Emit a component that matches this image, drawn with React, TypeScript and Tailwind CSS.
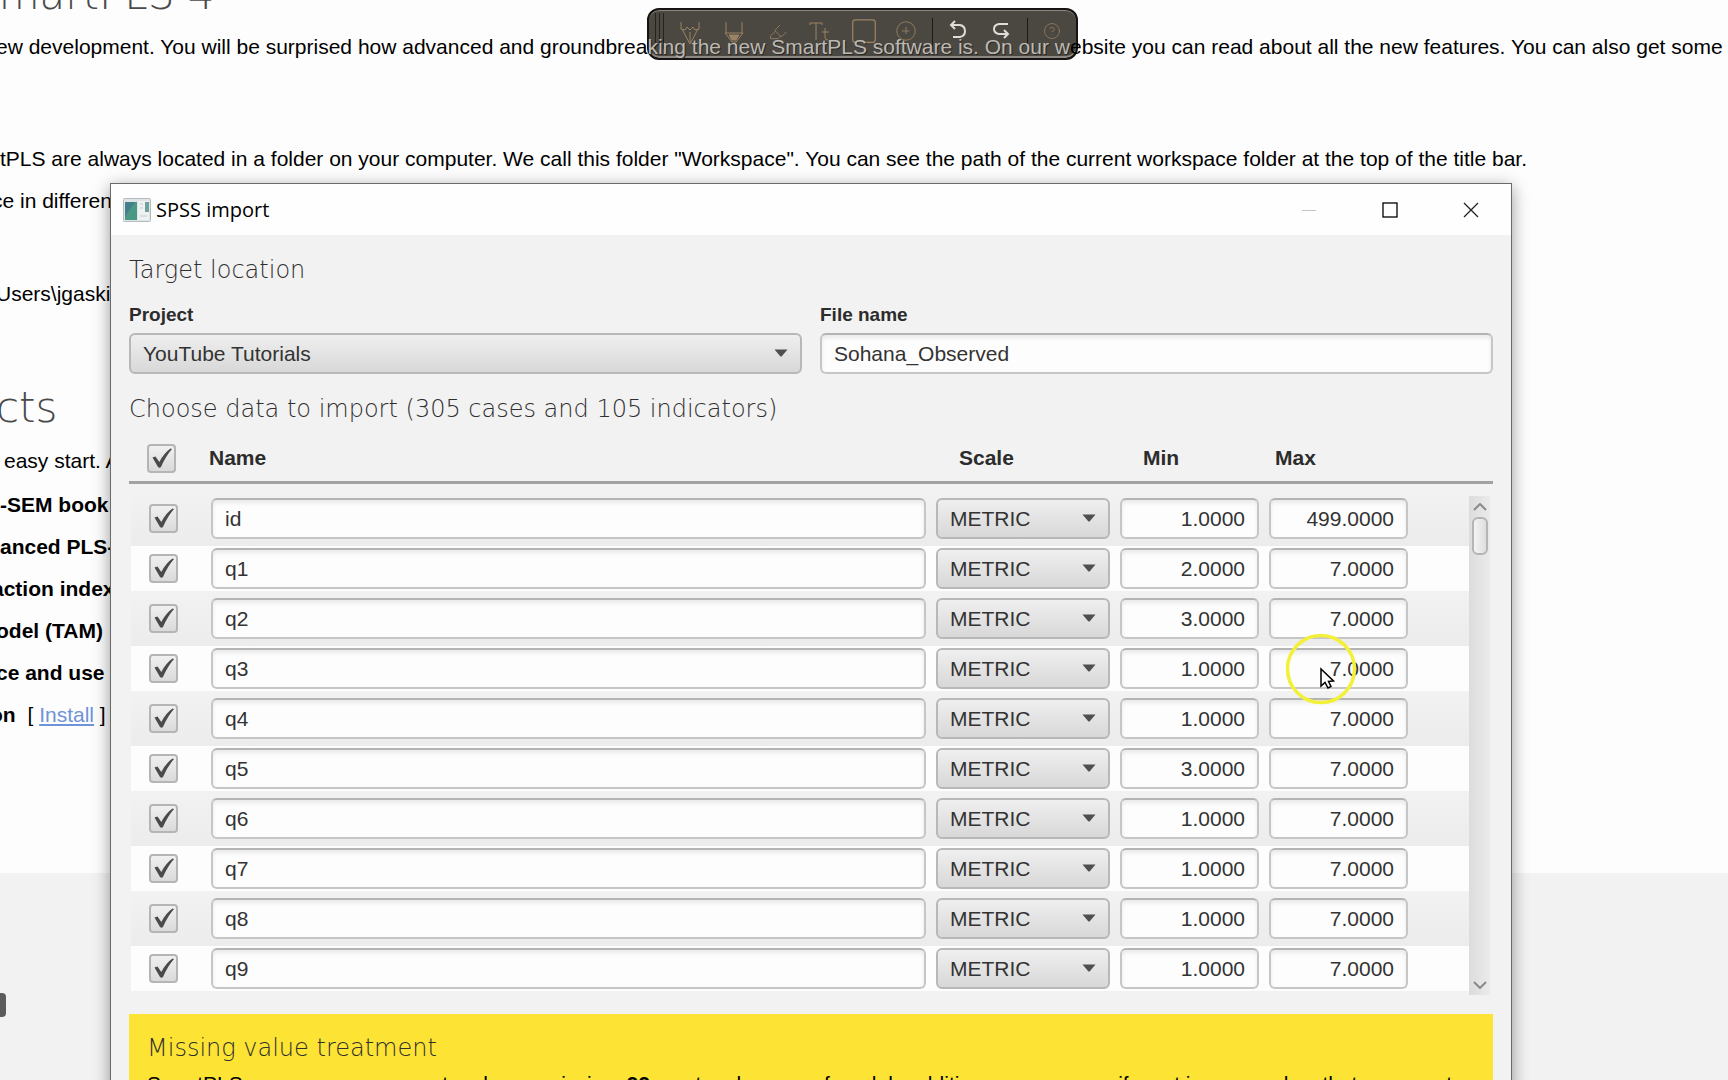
import { useState } from "react";
import { CircleHelp, CirclePlus, Highlighter, Square } from "lucide-react";

const rowData = [
  { name: "id", min: "1.0000", max: "499.0000" },
  { name: "q1", min: "2.0000", max: "7.0000" },
  { name: "q2", min: "3.0000", max: "7.0000" },
  { name: "q3", min: "1.0000", max: "7.0000" },
  { name: "q4", min: "1.0000", max: "7.0000" },
  { name: "q5", min: "3.0000", max: "7.0000" },
  { name: "q6", min: "1.0000", max: "7.0000" },
  { name: "q7", min: "1.0000", max: "7.0000" },
  { name: "q8", min: "1.0000", max: "7.0000" },
  { name: "q9", min: "1.0000", max: "7.0000" },
];

const inputClass =
  "block h-[41px] w-full rounded-md border-2 border-[#c6c6c6] border-t-[#b4b4b4] bg-[#fdfdfd] px-3 text-[21px] text-[#333] shadow-[inset_0_3px_4px_rgba(0,0,0,0.08)] outline-none";

const headingClass = "font-['DejaVu_Sans'] font-extralight";

const Checkbox = ({ label }: { label: string }) => {
  const [checked, setChecked] = useState(true);
  return (
    <label className="relative block size-[29px]">
      <input
        type="checkbox"
        aria-label={label}
        checked={checked}
        onChange={() => setChecked(!checked)}
        className="block size-full appearance-none rounded-sm border-2 border-[#b5b5b5] bg-linear-to-b from-[#f0f0f0] to-[#dadada]"
      />
      {checked && (
        <svg viewBox="0 0 29 29" className="pointer-events-none absolute inset-0 size-full">
          <path d="M5.5 13.5 L8.5 12.5 L12.3 18 Q17 9 23.5 4.5 L25 5 Q18.5 12.5 14 23 Q12.5 24.5 11 23 Z" fill="#4a4a4a" />
        </svg>
      )}
    </label>
  );
};

const Dropdown = ({ id, label, value }: { id?: string; label?: string; value: string }) => (
  <div className="relative">
    <select
      id={id}
      aria-label={label}
      className="block h-[41px] w-full appearance-none rounded-md border-2 border-[#b8b8b8] bg-linear-to-b from-[#efefef] to-[#d8d8d8] px-3 text-[21px] text-[#333] outline-none"
    >
      <option>{value}</option>
    </select>
    <svg viewBox="0 0 14 8" className="pointer-events-none absolute top-4 right-3.5 h-2 w-3.5">
      <path d="M0.5 0.5 H13.5 L8 7 Q7 8 6 7 Z" fill="#4f4f4f" />
    </svg>
  </div>
);

const Toolbar = () => (
  <div className="absolute top-2 left-[647px] flex h-[52px] w-[431px] items-start rounded-xl border-2 border-[#151412] bg-[#4b4741] pt-1.5 shadow-[inset_0_1px_0_#8b8882,inset_0_-2px_0_#8b8882]">
    <div className="mt-[-3px] ml-1.5 flex gap-[3px]">
      <span className="h-9 w-px bg-[#25231f]" />
      <span className="h-9 w-px bg-[#25231f]" />
      <span className="h-9 w-px bg-[#25231f]" />
    </div>
    <div className="ml-1 flex flex-1 items-start text-[#9b8364]">
      <button aria-label="Pen" className="flex w-11 justify-center pt-1">
        <svg viewBox="0 0 20 26" className="h-6.5 w-5" fill="none" stroke="currentColor" strokeWidth="1">
          <path d="M1 2 V9 L5 10 L7 7 L10 10 L13 7 L15 10 L19 9 V2 M2 9 L10 24 L18 9 M10 12 V22" />
        </svg>
      </button>
      <button aria-label="Marker" className="flex w-11 justify-center pt-1">
        <svg viewBox="0 0 20 26" className="h-6.5 w-5" fill="none" stroke="currentColor" strokeWidth="1">
          <path d="M2 2 V13 M18 2 V13 M1 13 H19 L12 22 H8 Z" />
          <path d="M5 15 H15 L12 20 H8 Z" fill="currentColor" />
        </svg>
      </button>
      <button aria-label="Highlighter" className="flex w-11 justify-center pt-1.5">
        <Highlighter size={20} strokeWidth={1} />
      </button>
      <button aria-label="Text" className="flex w-10 justify-center pt-1">
        <svg viewBox="0 0 22 24" className="h-6 w-5.5" fill="none" stroke="currentColor" strokeWidth="1">
          <path d="M1 5 V3 H13 V5 M7 3 V20 M16 8 V18 Q16 20 19 20 M13 12 H20" />
        </svg>
      </button>
      <button aria-label="Shape" className="flex w-12 justify-center">
        <Square size={30} strokeWidth={1} />
      </button>
      <button aria-label="Magnifier" className="flex w-9 justify-center pt-1">
        <CirclePlus size={22} strokeWidth={1} strokeDasharray="3 1" />
      </button>
      <span className="mt-0.5 ml-2 h-7 w-px bg-[#1d1b18]" />
      <button aria-label="Undo" className="flex w-[50px] justify-center pt-1 text-[#deddd9]">
        <svg viewBox="0 0 18 20" className="h-5 w-4.5" fill="none" stroke="currentColor" strokeWidth="2">
          <path d="M6 1 L2 5 L6 9 M2 5 H11 Q16 6 16 11 Q16 16 11 17 H4" />
        </svg>
      </button>
      <button aria-label="Redo" className="flex w-9 justify-center pt-1.5 text-[#deddd9]">
        <svg viewBox="0 0 18 20" className="h-5 w-4.5" fill="none" stroke="currentColor" strokeWidth="2">
          <path d="M16 2 H7 Q2 3 2 7 Q2 11 7 12 H15 M12 8 L16 12 L12 16" />
        </svg>
      </button>
      <span className="mt-0.5 ml-2 h-7 w-px bg-[#1d1b18]" />
      <button aria-label="Help" className="flex flex-1 justify-center pt-1.5">
        <CircleHelp size={18} strokeWidth={1} />
      </button>
    </div>
  </div>
);

// start page behind the dialog, scrolled sideways so the line starts are cut off
const StartPage = () => (
  <main className="flex min-h-screen flex-col text-[21px] leading-[42px] whitespace-nowrap text-black">
    <h1 className={`${headingClass} -mt-[31px] -ml-7 text-[42px] leading-[52px] text-[#4a4a4a]`}>SmartPLS 4</h1>
    <Toolbar />
    <p className="relative z-10 mt-[5px] -ml-1">
      ew development. You will be surprised how advanced and groundbrea
      <span className="text-[#bcb9b3] [text-shadow:1px_1px_0_#2a2824]">
        king the new SmartPLS software is. On our w
      </span>
      ebsite you can read about all the new features. You can also get some
    </p>
    <p className="mt-[70px]">
      tPLS are always located in a folder on your computer. We call this folder "Workspace". You can see the path of
      the current workspace folder at the top of the title bar.
    </p>
    <p className="-ml-2">ce in different</p>
    <p className="mt-[51px] -ml-1">Users\jgaskin</p>
    <h2 className={`${headingClass} mt-[67px] -ml-1 text-[42px] leading-[52px] text-[#4a4a4a]`}>cts</h2>
    <p className="mt-1.5 ml-1">easy start. All</p>
    <ul className="mt-0.5 font-bold">
      <li>-SEM book</li>
      <li>anced PLS-</li>
      <li className="-ml-2">action index</li>
      <li className="-ml-1">odel (TAM)</li>
      <li className="-ml-1">ce and use</li>
      <li className="-ml-2.5">
        on <span className="ml-1.5 font-normal">[ <a href="#install" className="text-[#6f93d8] underline">Install</a> ]</span>
      </li>
    </ul>
    <footer className="mt-[137px] flex-1 bg-[#f2f2f2] pt-[120px]">
      <div className="h-6 w-1.5 rounded-r-sm bg-[#5c5c5c]" />
    </footer>
  </main>
);

const TitleBar = () => (
  <header className="flex h-[51px] shrink-0 items-center bg-[#fefefe] pl-3">
    <svg viewBox="0 0 28 24" className="h-6 w-7">
      <rect x="0.5" y="0.5" width="27" height="23" rx="1" fill="#dfe5e6" stroke="#b4bcbe" />
      <rect x="2" y="4" width="12" height="18" fill="#4a9987" />
      <path d="M2 4 H12 L2 19 Z" fill="#447f8c" />
      <rect x="15" y="3" width="11" height="19" fill="#eef1f1" />
      <rect x="22" y="4" width="4" height="10" fill="#6fa09b" />
      <path d="M17 6 H20 M17 10 H20 M17 18 H24" stroke="#c5cccc" />
    </svg>
    <h2 className="ml-[5px] flex-1 font-['Open_Sans'] text-[20px] leading-7 text-black">SPSS import</h2>
    <button aria-label="Minimize" className="flex h-full w-[81px] items-center justify-center">
      <svg viewBox="0 0 14 14" className="size-3.5"><path d="M0 7.5 H14" stroke="#c4c4c4" /></svg>
    </button>
    <button aria-label="Maximize" className="flex h-full w-[81px] items-center justify-center">
      <svg viewBox="0 0 16 16" className="size-4"><rect x="1" y="1" width="14" height="14" fill="none" stroke="#000" strokeWidth="1.3" /></svg>
    </button>
    <button aria-label="Close" className="flex h-full w-[81px] items-center justify-center">
      <svg viewBox="0 0 16 16" className="size-4"><path d="M1 1 L15 15 M15 1 L1 15" stroke="#222" strokeWidth="1.3" /></svg>
    </button>
  </header>
);

const ScrollBar = () => (
  <div className="flex w-[21px] shrink-0 flex-col items-center bg-linear-to-r from-[#dcdcdc] to-[#ebebeb]">
    <button aria-label="Scroll up" className="flex h-[21px] items-center">
      <svg viewBox="0 0 14 8" className="h-2 w-3.5"><path d="M1 7 L7 1 L13 7" fill="none" stroke="#8a8a8a" strokeWidth="2" /></svg>
    </button>
    <div className="h-[38px] w-4 rounded-md border-2 border-[#b5b5b5] bg-linear-to-r from-[#f4f4f4] to-[#dedede]" />
    <button aria-label="Scroll down" className="mt-auto flex h-[21px] items-center">
      <svg viewBox="0 0 14 8" className="h-2 w-3.5"><path d="M1 1 L7 7 L13 1" fill="none" stroke="#8a8a8a" strokeWidth="2" /></svg>
    </button>
  </div>
);

const ImportTable = () => (
  <div>
    <div className="flex h-[51px] items-center border-b-3 border-[#a2a2a2] pt-0.5 text-[21px] font-bold text-[#2c2c2c]">
      <div className="w-20 pl-[18px]">
        <Checkbox label="Select all" />
      </div>
      <span className="flex-1">Name</span>
      <span className="w-46">Scale</span>
      <span className="w-33">Min</span>
      <span className="w-[218px]">Max</span>
    </div>
    <div className="mt-3 flex pr-[3px]">
      {/* list viewport, the first row is slightly scrolled under the edge */}
      <div className="mb-1 ml-0.5 flex-1 overflow-hidden">
        <table className="-mt-[5px] w-full table-fixed border-collapse">
          <colgroup>
            <col className="w-20" />
            <col />
            <col className="w-46" />
            <col className="w-[149px]" />
            <col className="w-[210px]" />
          </colgroup>
          <tbody>
            {rowData.map((row, key) => (
              <tr
                key={key}
                className={key % 2 === 0 ? "h-[55px] bg-linear-to-b from-[#f2f2f2] to-[#ececec]" : "h-[45px] bg-[#fdfdfd]"}
              >
                <td className="p-0 pl-[18px]">
                  <Checkbox label={`Import ${row.name}`} />
                </td>
                <td className="p-0">
                  <input aria-label="Name" defaultValue={row.name} className={inputClass} />
                </td>
                <td className="p-0 pl-2.5">
                  <Dropdown label={`Scale of ${row.name}`} value="METRIC" />
                </td>
                <td className="p-0 pl-2.5">
                  <input aria-label="Min" defaultValue={row.min} className={`${inputClass} text-right`} />
                </td>
                <td className="p-0 pr-[61px] pl-2.5">
                  <input aria-label="Max" defaultValue={row.max} className={`${inputClass} text-right`} />
                </td>
              </tr>
            ))}
          </tbody>
        </table>
      </div>
      <ScrollBar />
    </div>
  </div>
);

const ImportDialog = () => (
  <section className="absolute top-[183px] right-[216px] left-[110px] z-20 border border-[#6a6a6a] bg-[#f2f2f2] shadow-[0_4px_16px_rgba(0,0,0,0.4)]">
    <TitleBar />
    <div className="px-[18px] pt-[21px]">
      <h3 className={`${headingClass} text-[24px] leading-7 text-[#2f2f2f]`}>Target location</h3>
      <div className="mt-[17px] grid grid-cols-2 gap-[18px]">
        <div>
          <label htmlFor="project" className="mb-1 block text-[19px] leading-7 font-bold text-[#2c2c2c]">
            Project
          </label>
          <Dropdown id="project" value="YouTube Tutorials" />
        </div>
        <div>
          <label htmlFor="file-name" className="mb-1 block text-[19px] leading-7 font-bold text-[#2c2c2c]">
            File name
          </label>
          <input id="file-name" defaultValue="Sohana_Observed" className={inputClass} />
        </div>
      </div>
      <h3 className={`${headingClass} mt-[21px] mb-2.5 text-[24px] leading-7 text-[#2f2f2f]`}>
        Choose data to import (305 cases and 105 indicators)
      </h3>
      <ImportTable />
      <div className="mt-[19px] h-52 bg-[#fce334] px-[18px] pt-5 text-black">
        <h3 className={`${headingClass} text-[24px] leading-7 text-[#2f2f2f]`}>Missing value treatment</h3>
        <p className="mt-2 text-[21px] leading-7 whitespace-nowrap">
          SmartPLS can process segment codes as missing. <b>99</b> must code more of models additions can process if
          must in your codes, that represent
        </p>
      </div>
    </div>
  </section>
);

const Pointer = () => (
  <svg viewBox="0 0 72 72" className="pointer-events-none absolute top-[633px] left-[1285px] z-30 size-18">
    <circle cx="36" cy="36" r="33.5" fill="none" stroke="#f3f03a" strokeWidth="3.5" />
    <path d="M36 36 V53 L40 49.5 L43 55 L46 53.5 L43.5 48.5 L48.5 48 Z" fill="#fff" stroke="#000" strokeWidth="1.5" />
  </svg>
);

const App = () => {
  return (
    <div className="relative h-screen overflow-hidden bg-[#fdfdfd] font-['Liberation_Sans',Arial,sans-serif]">
      <StartPage />
      <ImportDialog />
      <Pointer />
    </div>
  );
};

export default App;
